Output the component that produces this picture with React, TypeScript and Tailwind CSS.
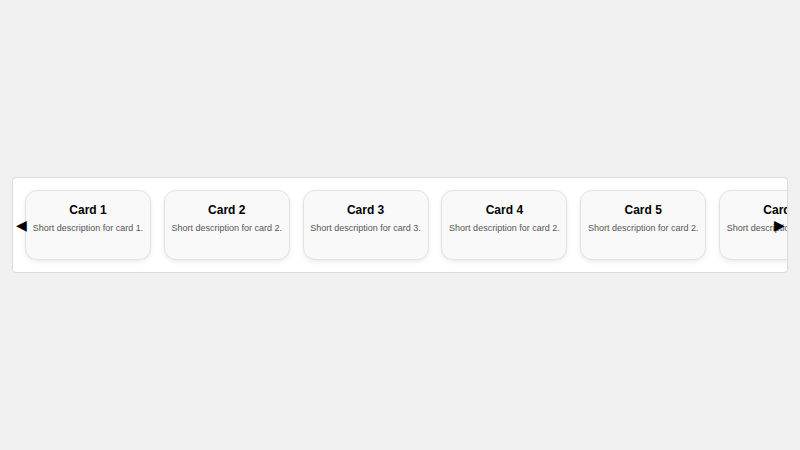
import React from "react";

const cards = [
  { title: "Card 1", text: "Short description for card 1." },
  { title: "Card 2", text: "Short description for card 2." },
  { title: "Card 3", text: "Short description for card 3." },
  { title: "Card 4", text: "Short description for card 2." },
  { title: "Card 5", text: "Short description for card 2." },
  { title: "Card 6", text: "Short description for card 2." },
  { title: "Card 7", text: "Short description for card 2." },
];

const App: React.FC = () => {
  return (
    <div
      className="flex h-screen w-full items-center bg-[#f0f0f0] px-3"
      style={{ fontFamily: '"Liberation Sans", Arial, sans-serif' }}
    >
      <div className="relative w-full overflow-hidden rounded-[4px] border border-[#dcdcdc] bg-white p-3">
        <div className="flex gap-[12.8px]">
          {cards.map((card) => (
            <div
              key={card.title}
              className="h-[70px] w-[126px] shrink-0 rounded-xl border border-[#e2e2e2] bg-[#f9f9f9] pt-[12px] text-center shadow-[0_2px_4px_rgba(0,0,0,0.08)]"
            >
              <h3 className="text-[12px] font-bold leading-[15px] text-black">
                {card.title}
              </h3>
              <p className="mt-[4px] whitespace-nowrap text-[9px] leading-[12px] text-[#555]">
                {card.text}
              </p>
            </div>
          ))}
        </div>
        <button className="absolute left-[3px] top-1/2 -translate-y-1/2 text-[14px] leading-none text-black">
          ◀
        </button>
        <button className="absolute right-[2px] top-1/2 -translate-y-1/2 text-[14px] leading-none text-black">
          ▶
        </button>
      </div>
    </div>
  );
};

export default App;
